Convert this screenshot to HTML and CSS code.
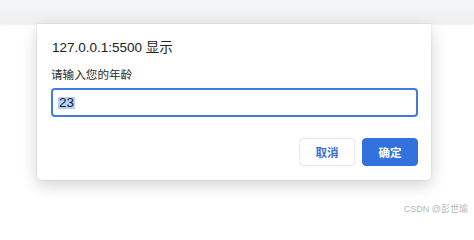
FILE: index.html
```html
<!DOCTYPE html>
<html lang="zh-CN">
<head>
<meta charset="utf-8">
<title>prompt</title>
<link rel="stylesheet" href="styles.css">
</head>
<body>
<div class="toolbar"></div>
<div class="stage">
  <div class="dialog">
    <div class="title">127.0.0.1:5500 显示</div>
    <div class="label">请输入您的年龄</div>
    <div class="input"><span class="sel">23</span></div>
    <div class="actions">
      <button class="btn cancel">取消</button>
      <button class="btn ok">确定</button>
    </div>
  </div>
  <div class="mark">CSDN @彭世瑜</div>
</div>
</body>
</html>
```
FILE: styles.css
```css
html, body {
  margin: 0;
  padding: 0;
  background: #ffffff;
  font-family: "Liberation Sans", "Noto Sans CJK SC", sans-serif;
  color: #202124;
}
.toolbar {
  height: 24px;
  background: linear-gradient(#f4f5f6, #eff0f2);
  box-shadow: 0 1px 2px rgba(0,0,0,0.06);
}
.stage {
  display: flex;
  flex-direction: column;
}
.dialog {
  margin-left: 37px;
  width: 394px;
  height: 156px;
  box-sizing: border-box;
  padding: 15px 13px 14px 14px;
  background: #fff;
  border-radius: 0 0 5px 5px;
  box-shadow: 0 5px 16px rgba(0,0,0,0.18), 0 0 2px rgba(0,0,0,0.12);
  display: flex;
  flex-direction: column;
  position: relative;
  z-index: 1;
}
.title {
  font-size: 13.5px;
  line-height: 18px;
  height: 18px;
  padding-left: 1px;
}
.label {
  margin-top: 10px;
  font-family: "Noto Sans CJK SC", sans-serif;
  font-size: 11.6px;
  line-height: 15px;
  height: 15px;
  color: #2a2a2a;
}
.input {
  margin-top: 6px;
  height: 29px;
  box-sizing: border-box;
  border: 2px solid #4379e0;
  border-radius: 4px;
  padding-left: 5px;
  display: flex;
  align-items: center;
  font-size: 13.5px;
}
.sel {
  background: #b5d3f7;
  line-height: 12px;
  padding: 0 1px;
  color: #1a1a1a;
}
.actions {
  margin-top: 21px;
  display: flex;
  justify-content: flex-end;
  gap: 7px;
}
.btn {
  width: 56px;
  height: 28px;
  border-radius: 4px;
  font-family: "Noto Sans CJK SC", sans-serif;
  font-size: 11.5px;
  font-weight: 700;
  padding: 0;
  cursor: pointer;
}
.cancel {
  background: #fff;
  border: 1px solid #e4e6ea;
  color: #3a6fcf;
}
.ok {
  background: #3172dd;
  border: 1px solid #3172dd;
  color: #fff;
}
.mark {
  margin-top: 24px;
  padding-right: 6px;
  text-align: right;
  font-family: "Liberation Sans", "Noto Sans CJK SC", sans-serif;
  font-size: 9px;
  line-height: 11px;
  color: #b8b8b8;
}
```
